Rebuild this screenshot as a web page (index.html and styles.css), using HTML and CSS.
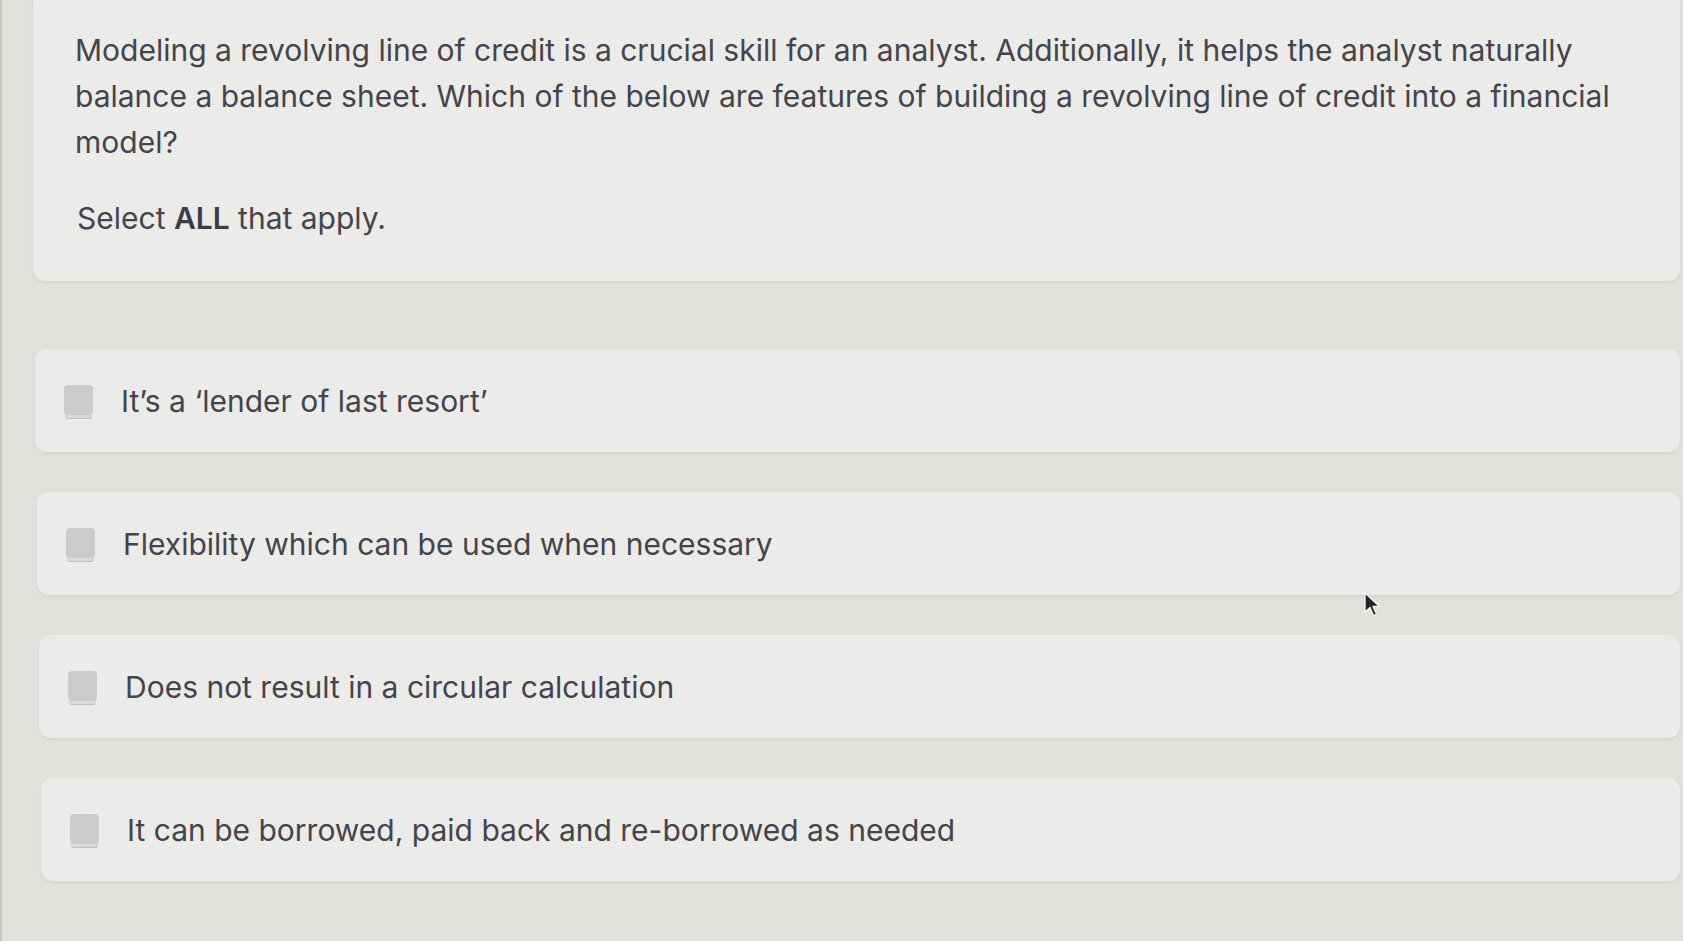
FILE: index.html
```html
<!DOCTYPE html>
<html lang="en">
<head>
<meta charset="utf-8">
<title>Revolving line of credit</title>
<link rel="stylesheet" href="styles.css">
</head>
<body>
<div class="page">
  <section class="question">
    <p class="prompt">Modeling a revolving line of credit is a crucial skill for an analyst. Additionally, it helps the analyst naturally balance a balance sheet. Which of the below are features of building a revolving line of credit into a financial model?</p>
    <p class="instruction">Select <b>ALL</b> that apply.</p>
  </section>
  <ul class="options">
    <li class="option o1"><span class="box"></span><span class="label">It’s a ‘lender of last resort’</span></li>
    <li class="option o2"><span class="box"></span><span class="label">Flexibility which can be used when necessary</span></li>
    <li class="option o3"><span class="box"></span><span class="label">Does not result in a circular calculation</span></li>
    <li class="option o4"><span class="box"></span><span class="label">It can be borrowed, paid back and re-borrowed as needed</span></li>
  </ul>
  <svg class="cursor" width="22" height="28" viewBox="0 0 22 28"><path d="M2 2 L2 21 L7 16.5 L10.5 24.5 L13.5 23.2 L10 15.5 L16.5 15.5 Z" fill="#25232e" stroke="#f4f4f2" stroke-width="1.3" stroke-linejoin="round"/></svg>
</div>
</body>
</html>
```
FILE: styles.css
```css
html, body {
  margin: 0;
  padding: 0;
}
body {
  background: #e0e0dd;
  font-family: Inter, "Open Sans", "Liberation Sans", sans-serif;
  color: #45434c;
  width: 1683px;
  height: 941px;
  overflow: hidden;
}
.page {
  position: relative;
  height: 941px;
  box-sizing: border-box;
  padding: 0 3px 0 31px;
  border-left: 2px solid #c8c8c5;
}
.question {
  background: #ebebe9;
  border-radius: 0 0 12px 12px;
  box-shadow: 0 2px 3px rgba(0,0,0,0.06);
  padding: 27px 40px 40px 42px;
  height: 281px;
  box-sizing: border-box;
}
.prompt {
  margin: 0;
  font-size: 30px;
  line-height: 46px;
}
.instruction {
  margin: 30px 0 0 2px;
  font-size: 30px;
  line-height: 46px;
}
.instruction b {
  font-weight: 600;
  color: #3d3b44;
}
.options {
  list-style: none;
  margin: 68px 0 0 2px;
  padding: 0;
  display: flex;
  flex-direction: column;
  gap: 40px;
}
.option {
  height: 103px;
  background: #ebebe9;
  border-radius: 12px;
  box-shadow: 0 2px 3px rgba(0,0,0,0.05);
  display: flex;
  align-items: center;
  padding-left: 29px;
}
.o2 { margin-left: 2px; }
.o3 { margin-left: 4px; }
.o4 { margin-left: 6px; }
.box {
  width: 29px;
  height: 30px;
  flex: none;
  background: #cbcbc9;
  border-radius: 4px;
  box-shadow: 0 4px 0 -1px #dadad8, 0 5px 0 -1px #c2c2c0;
  margin-top: -1px;
}
.label {
  margin-left: 28px;
  font-size: 30px;
  color: #45434c;
}
.cursor {
  position: absolute;
  left: 1361px;
  top: 591px;
}
```
